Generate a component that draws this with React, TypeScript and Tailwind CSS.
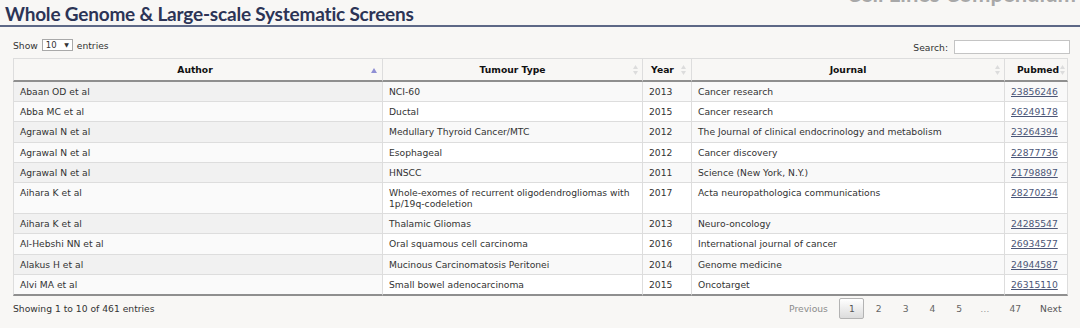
import React from "react";

const rows: string[][] = [
  ["Abaan OD et al", "NCI-60", "2013", "Cancer research", "23856246"],
  ["Abba MC et al", "Ductal", "2015", "Cancer research", "26249178"],
  ["Agrawal N et al", "Medullary Thyroid Cancer/MTC", "2012", "The Journal of clinical endocrinology and metabolism", "23264394"],
  ["Agrawal N et al", "Esophageal", "2012", "Cancer discovery", "22877736"],
  ["Agrawal N et al", "HNSCC", "2011", "Science (New York, N.Y.)", "21798897"],
  ["Aihara K et al", "Whole-exomes of recurrent oligodendrogliomas with\n1p/19q-codeletion", "2017", "Acta neuropathologica communications", "28270234"],
  ["Aihara K et al", "Thalamic Gliomas", "2013", "Neuro-oncology", "24285547"],
  ["Al-Hebshi NN et al", "Oral squamous cell carcinoma", "2016", "International journal of cancer", "26934577"],
  ["Alakus H et al", "Mucinous Carcinomatosis Peritonei", "2014", "Genome medicine", "24944587"],
  ["Alvi MA et al", "Small bowel adenocarcinoma", "2015", "Oncotarget", "26315110"],
];

function SortAsc() {
  return (
    <svg width="6" height="5" viewBox="0 0 6 5" className="absolute right-[5px] top-[9px]">
      <path d="M3 0 L6 5 L0 5 Z" fill="#8f8fd4" />
    </svg>
  );
}

function SortBoth({ right }: { right: string }) {
  return (
    <svg width="5" height="10" viewBox="0 0 5 10" className={`absolute top-[6px] ${right}`}>
      <path d="M2.5 0 L5 4 L0 4 Z" fill="#dcdcdc" />
      <path d="M2.5 10 L5 6 L0 6 Z" fill="#dcdcdc" />
    </svg>
  );
}

export default function App() {
  return (
    <div className="w-[1080px] h-[328px] overflow-hidden bg-[#f8f7f5] text-[#333] font-['DejaVu_Sans',sans-serif] text-[9.2px] leading-[11px]">
      {/* title bar */}
      <div className="flex justify-between h-[27px] border-b-2 border-[#5d6886]">
        <h1 className="pl-[5px] pt-[4px] font-['Lato',sans-serif] font-bold text-[19px] leading-[20px] tracking-[-0.2px] text-[#2c3456]">
          Whole Genome &amp; Large-scale Systematic Screens
        </h1>
        <span className="-mt-[16px] pr-[4px] font-['Lato',sans-serif] font-bold text-[22px] leading-[20px] text-[#a8a8a8] whitespace-nowrap">
          Cell Lines Compendium
        </span>
      </div>

      {/* length + search */}
      <div className="flex justify-between items-start h-[16px] mt-[12px] pl-[13px] pr-[10px]">
        <div className="flex items-center h-[12px]">
          <span>Show</span>
          <div className="ml-[4px] mr-[4px] w-[31px] h-[12px] border border-[#a9a9a9] bg-white flex items-center justify-between px-[3px] text-[8.5px] leading-[10px]">
            <span>10</span>
            <span className="text-[6px]">▼</span>
          </div>
          <span>entries</span>
        </div>
        <div className="flex items-center h-[14px] mt-[1px]">
          <span>Search:</span>
          <div className="ml-[6px] w-[116px] h-[14px] border border-[#c4c4c4] bg-white" />
        </div>
      </div>

      {/* table */}
      <table className="ml-[13px] mt-[3px] w-[1055px] table-fixed border-separate border-spacing-0">
        <colgroup>
          <col className="w-[370px]" />
          <col className="w-[260px]" />
          <col className="w-[49px]" />
          <col className="w-[313px]" />
          <col className="w-[63px]" />
        </colgroup>
        <thead>
          <tr className="text-[#111] font-bold">
            <th className="relative border-t border-l border-r border-b-2 border-[#ddd] border-b-[#8f8f8f] py-[5px] pl-[4px] pr-[10px] text-center">
              Author
              <SortAsc />
            </th>
            <th className="relative border-t border-r border-b-2 border-[#ddd] border-b-[#8f8f8f] py-[5px] px-[6px] text-center">
              Tumour Type
              <SortBoth right="right-[4px]" />
            </th>
            <th className="relative border-t border-r border-b-2 border-[#ddd] border-b-[#8f8f8f] py-[5px] pl-0 pr-[9px] text-center whitespace-nowrap">
              Year
              <SortBoth right="right-[5px]" />
            </th>
            <th className="relative border-t border-r border-b-2 border-[#ddd] border-b-[#8f8f8f] py-[5px] px-[6px] text-center">
              Journal
              <SortBoth right="right-[4px]" />
            </th>
            <th className="relative border-t border-r border-b-2 border-[#ddd] border-b-[#8f8f8f] py-[5px] pl-[6px] pr-[2px] text-center whitespace-nowrap">
              Pubmed
              <SortBoth right="right-[2px]" />
            </th>
          </tr>
        </thead>
        <tbody>
          {rows.map((r, i) => {
            const odd = i % 2 === 0;
            const last = i === rows.length - 1;
            const base = `pl-[6px] pr-[6px] pt-[4px] pb-[4.2px] align-top border-r border-[#ddd] whitespace-pre ${i > 0 ? "border-t" : ""} ${last ? "border-b-2 border-b-[#8f8f8f]" : ""}`;
            const bg = odd ? "bg-[#f9f9f9]" : "bg-white";
            return (
              <tr key={i}>
                <td className={`${base} border-l ${odd ? "bg-[#f1f1f1]" : "bg-[#fafafa]"}`}>{r[0]}</td>
                <td className={`${base} ${bg}`}>{r[1]}</td>
                <td className={`${base} ${bg}`}>{r[2]}</td>
                <td className={`${base} ${bg}`}>{r[3]}</td>
                <td className={`${base} ${bg}`}>
                  <a href="#" className="text-[#4b5677] underline">{r[4]}</a>
                </td>
              </tr>
            );
          })}
        </tbody>
      </table>

      {/* footer */}
      <div className="flex justify-between items-center h-[20px] mt-[3px] pl-[13px] pr-[9px]">
        <span>Showing 1 to 10 of 461 entries</span>
        <div className="flex items-center">
          <span className="px-[8.5px] py-[4px] border border-transparent text-[#8c8c8c]">Previous</span>
          <span className="ml-[2px] px-[8.5px] py-[4px] border border-[#b3b3b3] rounded-[2px] bg-linear-to-b from-white to-[#dcdcdc] text-[#555]">1</span>
          <span className="ml-[2px] px-[8.5px] py-[4px] border border-transparent text-[#666]">2</span>
          <span className="ml-[2px] px-[8.5px] py-[4px] border border-transparent text-[#666]">3</span>
          <span className="ml-[2px] px-[8.5px] py-[4px] border border-transparent text-[#666]">4</span>
          <span className="ml-[2px] px-[8.5px] py-[4px] border border-transparent text-[#666]">5</span>
          <span className="px-[8.5px] text-[#999]">…</span>
          <span className="ml-[2px] px-[8.5px] py-[4px] border border-transparent text-[#666]">47</span>
          <span className="px-[8.5px] py-[4px] border border-transparent text-[#555]">Next</span>
        </div>
      </div>
    </div>
  );
}
